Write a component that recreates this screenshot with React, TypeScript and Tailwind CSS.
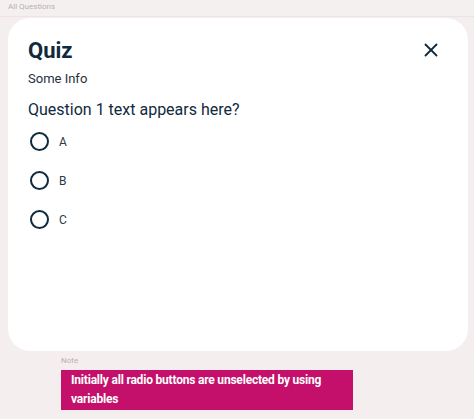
import { X } from 'lucide-react';

const options = ['A', 'B', 'C'];

function Radio({ label }: { label: string }) {
  return (
    <label className="flex h-[39px] items-center gap-[10px]">
      <span className="ml-[22px] h-[19px] w-[19px] rounded-full border-2 border-[#0f2a3d]" />
      <span className="text-[12px] text-[#2a3a46]">{label}</span>
    </label>
  );
}

export default function App() {
  return (
    <div
      className="h-[419px] w-[474px] overflow-hidden bg-[#f4eeee]"
      style={{ fontFamily: 'Roboto, "Noto Sans", sans-serif' }}
    >
      <div className="h-[17px] border-b border-[#ece4e4] bg-[#f5f0f0] px-[8px] pt-[2px] text-[8px] leading-[10px] text-[#b7b0b0]">
        All Questions
      </div>
      <div className="pl-[8px] pr-[6px] pt-[1px]">
        <div className="flex h-[333px] flex-col rounded-[22px] bg-white px-[20px] pt-[19px]">
          <div className="flex items-start justify-between">
            <h1 className="text-[22px] font-bold leading-[28px] text-[#0f2a3d]">Quiz</h1>
            <button className="mr-[6px] mt-[2px] text-[#0f2a3d]">
              <X size={22} strokeWidth={2} />
            </button>
          </div>
          <p className="mt-[6px] text-[13px] leading-[16px] text-[#1f3140]">Some Info</p>
          <p className="mt-[13px] text-[16px] leading-[20px] text-[#0f2a3d]">
            Question 1 text appears here?
          </p>
          <div className="mt-[2px] -ml-[20px] flex flex-col">
            {options.map((o) => (
              <Radio key={o} label={o} />
            ))}
          </div>
        </div>
      </div>
      <div className="pl-[61px] pt-[5px]">
        <div className="text-[8px] leading-[10px] text-[#b8b0b0]">Note</div>
        <div className="mt-[4px] w-[292px] bg-[#c4106b] px-[10px] py-[1px] text-[12px] font-bold leading-[19px] tracking-[-0.2px] text-white">
          Initially all radio buttons are unselected by using variables
        </div>
      </div>
    </div>
  );
}
